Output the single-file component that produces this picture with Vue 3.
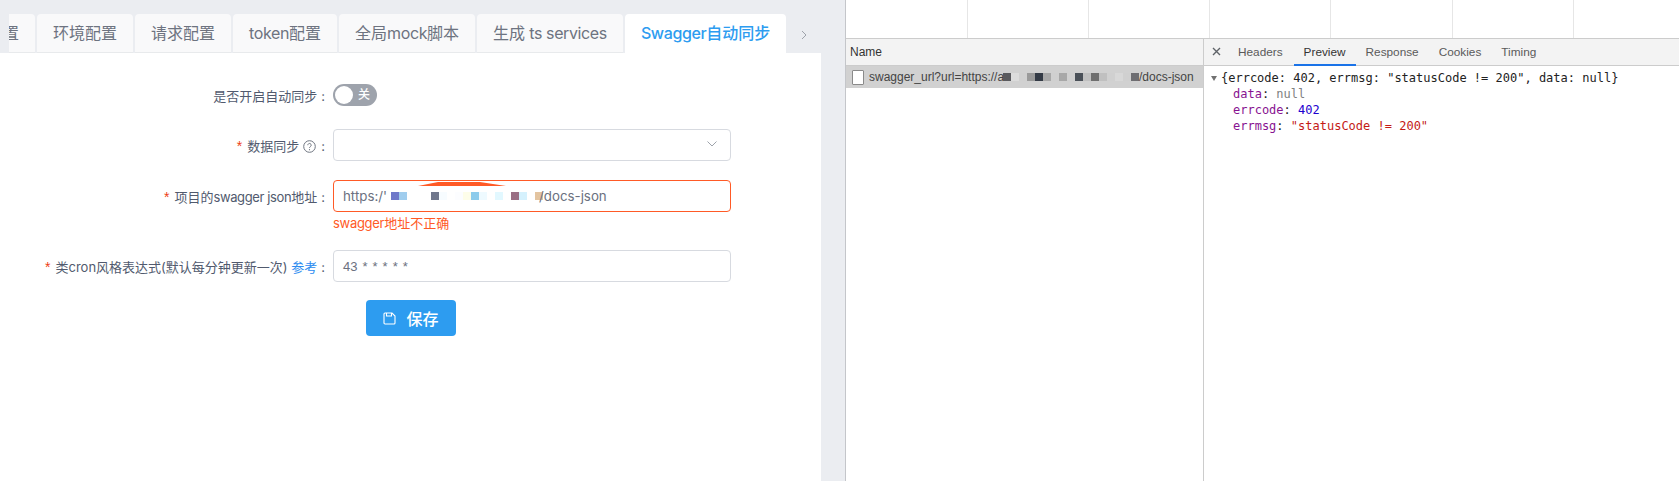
<script setup>
const tabs = [
  { id: 1, pre: '环境配置', la: '', post: '' },
  { id: 2, pre: '请求配置', la: '', post: '' },
  { id: 3, pre: '', la: 'token', post: '配置' },
  { id: 4, pre: '全局', la: 'mock', post: '脚本' },
  { id: 5, pre: '生成', la: ' ts services', post: '' }
]
const gridCols = [0, 1, 2, 3, 4, 5]
const urlCells = ['#6f79c9', '#a0cdee', '#fff', '#fff', '#fff', '#70778c', '#f7fcff', '#fff', '#fcfdff', '#fdfde9', '#8ccbeb', '#eefaff', '#fff', '#e2f8ff', '#fff', '#9a6f84', '#d5f1fd', '#fff', '#e3c4a0']
const rowCells = ['#5a5a5e', '#dcdcdc', '#d0d0d0', '#9a9a9a', '#333a45', '#a8a8a8', '#d0d0d0', '#a8a8a8', '#d0d0d0', '#4a5058', '#c0c0c0', '#6f6f6f', '#c0c0c0', '#d0d0d0', '#d8d8d8', '#d0d0d0', '#6e6e72']
const detailTabs = ['Headers', 'Preview', 'Response', 'Cookies', 'Timing']
</script>

<template>
  <div class="page">
    <section class="app">
      <div class="tabbar">
        <div class="tab clipped"><span>配置</span></div>
        <div v-for="t in tabs" :key="t.id" class="tab">{{ t.pre }}<span class="la">{{ t.la }}</span>{{ t.post }}</div>
        <div class="tab active"><span class="la">Swagger</span>自动同步</div>
        <svg class="next" width="8" height="10" viewBox="0 0 8 10"><path d="M2 1l4 4-4 4" fill="none" stroke="#9ea3ab" stroke-width="1" /></svg>
      </div>
      <div class="content">
        <form class="form" @submit.prevent>
          <div class="row switch-row">
            <label class="label">是否开启自动同步<span class="colon">:</span></label>
            <div class="switch"><span class="knob"></span><span class="off">关</span></div>
          </div>
          <div class="row select-row">
            <label class="label"><i>*</i>数据同步<svg class="help" width="13" height="13" viewBox="0 0 13 13"><circle cx="6.5" cy="6.5" r="5.8" fill="none" stroke="#6f7580" /><path d="M4.8 5.2a1.7 1.7 0 1 1 2.6 1.4c-.6.4-.9.7-.9 1.3" fill="none" stroke="#6f7580" /><circle cx="6.5" cy="9.7" r=".6" fill="#6f7580" /></svg><span class="colon">:</span></label>
            <div class="control">
              <svg class="arrow" width="12" height="8" viewBox="0 0 12 8"><path d="M1.5 1.5L6 6l4.5-4.5" fill="none" stroke="#9ea3ab" stroke-width="1" /></svg>
            </div>
          </div>
          <div class="row input-row">
            <label class="label"><i>*</i>项目的<span class="la">swagger json</span>地址<span class="colon">:</span></label>
            <div class="control error">
              <span>https:/'</span>
              <span class="cells url-cells"><b v-for="(c, i) in urlCells" :key="i" :style="{ background: c }"></b></span>
              <span class="url-tail">/docs-json</span>
              <svg class="smear" width="90" height="6" viewBox="0 0 90 6"><path d="M0 5L20 1H62L88 5Z" fill="#ff5a26" /></svg>
            </div>
          </div>
          <div class="err-row"><span class="la-err">swagger</span>地址不正确</div>
          <div class="row">
            <label class="label"><i>*</i>类cron风格表达式(默认每分钟更新一次) <a>参考</a><span class="colon">:</span></label>
            <div class="control cron">43 * * * * *</div>
          </div>
          <div class="btn-row">
            <button class="save" type="button">
              <svg width="13" height="13" viewBox="0 0 13 13"><path d="M1 2a1 1 0 0 1 1-1h7l3 3v7a1 1 0 0 1-1 1H2a1 1 0 0 1-1-1z" fill="none" stroke="#fff" stroke-width="1.1" /><path d="M3.5 1v3h5V1" fill="none" stroke="#fff" stroke-width="1.1" /></svg>
              <span>保存</span>
            </button>
          </div>
        </form>
      </div>
    </section>
    <section class="devtools">
      <div class="overview">
        <div v-for="c in gridCols" :key="c" class="col"></div>
      </div>
      <div class="split">
        <div class="names">
          <div class="names-head">Name</div>
          <div class="req">
            <span class="file"></span>
            <span class="req-a">swagger_url?url=https://a</span>
            <span class="cells row-cells"><b v-for="(c, i) in rowCells" :key="i" :style="{ background: c }"></b></span>
            <span>/docs-json</span>
          </div>
        </div>
        <div class="detail">
          <div class="detail-head">
            <svg class="close" width="9" height="9" viewBox="0 0 9 9"><path d="M1 1l7 7M8 1L1 8" stroke="#5f6368" stroke-width="1.4" /></svg>
            <div v-for="t in detailTabs" :key="t" class="dtab" :class="{ on: t === 'Preview' }">{{ t }}</div>
          </div>
          <div class="json">
            <div class="json-top"><span class="tri"></span>{errcode: 402, errmsg: "statusCode != 200", data: null}</div>
            <div class="json-line"><span class="k">data</span>: <span class="n">null</span></div>
            <div class="json-line"><span class="k">errcode</span>: <span class="d">402</span></div>
            <div class="json-line"><span class="k">errmsg</span>: <span class="s">"statusCode != 200"</span></div>
          </div>
        </div>
      </div>
    </section>
  </div>
</template>

<style>
html, body { margin: 0; background: #fff; }
</style>

<style scoped>
.page { display: flex; width: 1679px; height: 481px; overflow: hidden; font-family: Inter, "Noto Sans CJK SC", sans-serif; }
.app { width: 845px; flex: none; background: #ebedf1; padding-top: 14px; box-sizing: border-box; display: flex; flex-direction: column; }
.tabbar { display: flex; height: 39px; width: 821px; padding-left: 9px; box-sizing: border-box; gap: 2px; align-items: stretch; position: relative; }
.tab { padding: 0 16px; background: #f9f9fa; border-radius: 4px 4px 0 0; font-size: 16px; line-height: 38px; color: #6d7380; white-space: pre; border-bottom: 1px solid #e8eaec; box-sizing: border-box; }
.la { letter-spacing: -0.38px; }
.la-err { letter-spacing: -0.3px; }
.tab.clipped { width: 26px; padding: 0 16px 0 0; border-top-left-radius: 0; overflow: hidden; display: flex; justify-content: flex-end; }
.tab.clipped span { flex: none; }
.tab.active { background: #fff; color: #2d9cf0; font-weight: 500; border-bottom: 0; }
.next { margin: 16px 0 0 12px; }
.content { width: 821px; flex: 1; background: #fff; }
.form { padding-top: 31px; display: flex; flex-direction: column; font-size: 13px; color: #515a6e; }
.row { display: flex; align-items: center; height: 32px; }
.label { width: 325px; margin-right: 8px; flex: none; box-sizing: border-box; text-align: right; white-space: nowrap; }
.label i { font-style: normal; color: #ed4014; margin-right: 5px; font-size: 14px; font-family: "Liberation Sans", sans-serif; }
.label a { color: #2d8cf0; }
.colon { margin-left: 4px; }
.help { vertical-align: -2px; margin-left: 4px; margin-right: 1px; }
.switch-row { height: 22px; }
.select-row { margin-top: 23px; }
.input-row { margin-top: 19px; }
.switch { width: 44px; height: 22px; border-radius: 11px; background: #9ea3ac; position: relative; flex: none; }
.knob { position: absolute; left: 2px; top: 2px; width: 18px; height: 18px; border-radius: 50%; background: #fff; }
.off { position: absolute; right: 7px; top: 0; line-height: 22px; font-size: 12px; color: #fff; font-weight: 500; }
.control { width: 398px; height: 32px; flex: none; box-sizing: border-box; border: 1px solid #d7dae0; border-radius: 4px; padding: 0 9px; display: flex; align-items: center; position: relative; color: #6b7180; white-space: nowrap; font-size: 13.3px; }
.control.cron { font-family: "Liberation Sans", sans-serif; font-size: 13px; word-spacing: 1.4px; }
.arrow { position: absolute; right: 12px; top: 10px; }
.control.error { border-color: #ff5a26; }
.smear { position: absolute; left: 84px; top: 0; }
.cells { display: inline-flex; flex: none; }
.cells b { width: 8px; height: 8px; display: block; flex: none; }
.url-cells { margin-left: 4px; }
.url-tail { margin-left: -4px; }
.err-row { margin-left: 333px; line-height: 18px; margin-top: 2px; height: 36px; color: #ff5a26; font-size: 13px; }
.btn-row { margin-left: 366px; margin-top: 18px; }
.save { width: 90px; height: 36px; border: 0; background: #2d9cf0; color: #fff; border-radius: 4px; font-family: inherit; font-size: 16px; font-weight: 500; display: flex; align-items: center; justify-content: center; gap: 10px; padding: 0; }
.devtools { flex: 1; min-width: 0; border-left: 1px solid #c4c6ca; font-family: "Liberation Sans", Arial, sans-serif; font-size: 12px; color: #333; display: flex; flex-direction: column; }
.overview { height: 39px; box-sizing: border-box; display: flex; border-bottom: 1px solid #ccc; flex: none; padding-left: 0.6px; }
.col { width: 121.2px; height: 38px; box-sizing: border-box; border-right: 1px solid #e6e6e6; flex: none; }
.split { display: flex; flex: 1; }
.names { width: 357px; flex: none; border-right: 1px solid #ccc; }
.names-head { height: 27px; box-sizing: border-box; background: #f3f3f3; border-bottom: 1px solid #ccc; line-height: 26px; padding-left: 4px; }
.req { height: 22px; background: #d1d1d1; display: flex; align-items: center; white-space: nowrap; padding-left: 6px; color: #444; }
.file { width: 10px; height: 13px; background: #fff; border: 1px solid #8a8a8a; margin-right: 5px; flex: none; border-radius: 1px; }
.req-a { width: 134px; overflow: hidden; flex: none; }
.detail { flex: 1; }
.detail-head { height: 27px; box-sizing: border-box; background: #f3f3f3; border-bottom: 1px solid #ccc; display: flex; align-items: stretch; font-size: 11.8px; }
.close { margin: 8px 7px 0 8px; flex: none; }
.dtab { padding: 0 10px; line-height: 26px; color: #5a5a5a; height: 26px; box-sizing: border-box; }
.dtab:nth-child(3) { margin-left: 1px; }
.dtab.on { color: #333; border-bottom: 2px solid #1a73e8; height: 27px; }
.json { font-family: "DejaVu Sans Mono", monospace; font-size: 12px; line-height: 16px; color: #222; padding: 4px 0 0 17px; white-space: pre; }
.json-top { position: relative; }
.tri { position: absolute; left: -10px; top: 6px; width: 0; height: 0; border-left: 3.5px solid transparent; border-right: 3.5px solid transparent; border-top: 5px solid #727272; }
.json-line { padding-left: 12px; }
.k { color: #881391; }
.n { color: #808080; }
.d { color: #1c00cf; }
.s { color: #c41a16; }
</style>
